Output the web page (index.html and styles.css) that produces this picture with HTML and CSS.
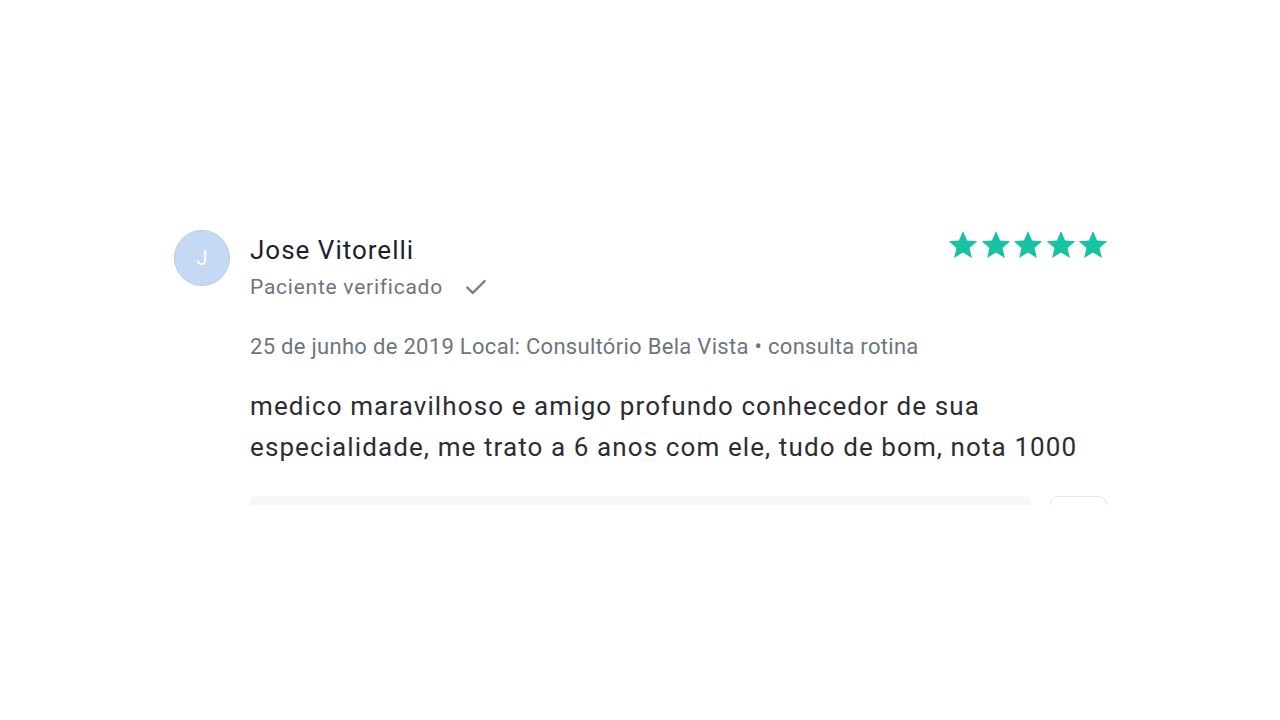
FILE: index.html
```html
<!DOCTYPE html>
<html lang="pt">
<head>
<meta charset="utf-8">
<link rel="stylesheet" href="styles.css">
</head>
<body>
<div class="page">
  <div class="review">
    <div class="avatar">J</div>
    <div class="content">
      <div class="head">
        <div class="who">
          <div class="name">Jose Vitorelli</div>
          <div class="verified">Paciente verificado
            <svg class="check" viewBox="0 0 24 24" width="26" height="26"><path d="M4 12.5l5 5L20 6.5" fill="none" stroke="#7a8087" stroke-width="2.2" stroke-linecap="round" stroke-linejoin="round"/></svg>
          </div>
        </div>
        <div class="stars">
          <svg viewBox="0 0 24 24" width="32" height="32"><path d="M12 1.5l3.1 7.1 7.6.6-5.8 5 1.8 7.5L12 17.7l-6.7 4 1.8-7.5-5.8-5 7.6-.6z" fill="#16c3a2"/></svg>
          <svg viewBox="0 0 24 24" width="32" height="32"><path d="M12 1.5l3.1 7.1 7.6.6-5.8 5 1.8 7.5L12 17.7l-6.7 4 1.8-7.5-5.8-5 7.6-.6z" fill="#16c3a2"/></svg>
          <svg viewBox="0 0 24 24" width="32" height="32"><path d="M12 1.5l3.1 7.1 7.6.6-5.8 5 1.8 7.5L12 17.7l-6.7 4 1.8-7.5-5.8-5 7.6-.6z" fill="#16c3a2"/></svg>
          <svg viewBox="0 0 24 24" width="32" height="32"><path d="M12 1.5l3.1 7.1 7.6.6-5.8 5 1.8 7.5L12 17.7l-6.7 4 1.8-7.5-5.8-5 7.6-.6z" fill="#16c3a2"/></svg>
          <svg viewBox="0 0 24 24" width="32" height="32"><path d="M12 1.5l3.1 7.1 7.6.6-5.8 5 1.8 7.5L12 17.7l-6.7 4 1.8-7.5-5.8-5 7.6-.6z" fill="#16c3a2"/></svg>
        </div>
      </div>
      <div class="meta">25 de junho de 2019 <span class="loc">Local: Consultório Bela Vista • consulta rotina</span></div>
      <p class="text">medico maravilhoso e amigo profundo conhecedor de sua especialidade, me trato a 6 anos com ele, tudo de bom, nota 1000</p>
      <div class="actions">
        <div class="bar"></div>
        <div class="btn"></div>
      </div>
    </div>
  </div>
</div>
</body>
</html>
```
FILE: styles.css
```css
html, body {
  margin: 0;
  padding: 0;
  background: #fff;
}
body {
  font-family: Roboto, "Liberation Sans", sans-serif;
  width: 1280px;
  height: 720px;
  overflow: hidden;
}
.page {
  padding: 230px 173px 0 174px;
}
.review {
  display: flex;
  gap: 20px;
}
.avatar {
  flex: none;
  width: 54px;
  height: 54px;
  border-radius: 50%;
  background: #c6d9f4;
  border: 1px solid #b5cbed;
  color: #fff;
  font-size: 20px;
  display: flex;
  align-items: center;
  justify-content: center;
}
.content {
  flex: 1;
}
.head {
  display: flex;
  justify-content: space-between;
  align-items: flex-start;
}
.name {
  font-size: 26px;
  letter-spacing: 1px;
  color: #1d1f2b;
  line-height: 40px;
}
.verified {
  font-size: 21px;
  letter-spacing: 0.75px;
  color: #6d757e;
  line-height: 34px;
  display: flex;
  align-items: center;
  gap: 20px;
}
.check {
  display: block;
}
.stars {
  display: flex;
  gap: 0.5px;
  margin-top: -1px;
  margin-right: -2px;
}
.stars svg {
  display: block;
}
.meta {
  margin-top: 28px;
  font-size: 22px;
  letter-spacing: 0.3px;
  color: #6d757e;
  line-height: 30px;
}
.text {
  margin: 24px 0 0;
  font-size: 26px;
  letter-spacing: 1.1px;
  line-height: 41px;
  color: #2b2d33;
}
.actions {
  margin-top: 28px;
  display: flex;
  gap: 19px;
  height: 9px;
  overflow: hidden;
}
.bar {
  flex: 1;
  height: 40px;
  background: #f6f7f8;
  border-radius: 6px;
}
.btn {
  width: 55px;
  height: 40px;
  border: 1px solid #e3e5e7;
  border-radius: 8px;
}
```
